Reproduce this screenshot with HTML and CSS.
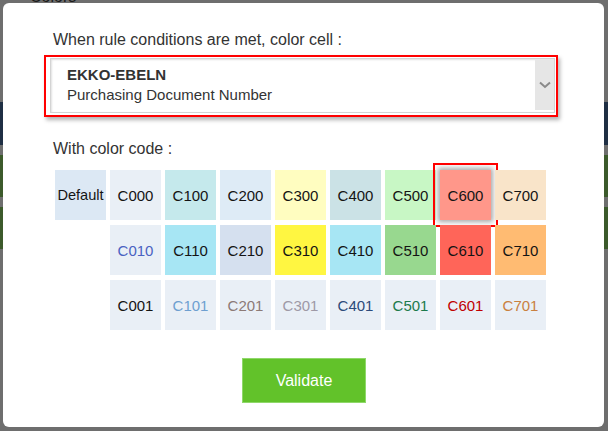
FILE: index.html
```html
<!DOCTYPE html>
<html>
<head>
<meta charset="utf-8">
<link rel="stylesheet" href="styles.css">
</head>
<body>
<div class="page">
  <div class="page-top"><span class="page-title">Colors</span></div>
  <div class="page-row navy"></div>
  <div class="page-row green"></div>
  <div class="page-row green"></div>
</div>
<div class="overlay"></div>
<div class="modal">
  <div class="label">When rule conditions are met, color cell :</div>
  <div class="select-wrap">
    <div class="select">
      <div class="select-text">
        <div class="sel-code">EKKO-EBELN</div>
        <div class="sel-desc">Purchasing Document Number</div>
      </div>
      <div class="select-arrow">
        <svg width="12" height="8" viewBox="0 0 12 8"><path d="M1 1.5 L6 6 L11 1.5" fill="none" stroke="#8a8a8a" stroke-width="2"/></svg>
      </div>
    </div>
  </div>
  <div class="label label-2">With color code :</div>
  <div class="grid">
    <div class="cell c-default">Default</div>
    <div class="cell c000">C000</div>
    <div class="cell c100">C100</div>
    <div class="cell c200">C200</div>
    <div class="cell c300">C300</div>
    <div class="cell c400">C400</div>
    <div class="cell c500">C500</div>
    <div class="cell c600 selected">C600</div>
    <div class="cell c700">C700</div>

    <div class="cell empty"></div>
    <div class="cell c010">C010</div>
    <div class="cell c110">C110</div>
    <div class="cell c210">C210</div>
    <div class="cell c310">C310</div>
    <div class="cell c410">C410</div>
    <div class="cell c510">C510</div>
    <div class="cell c610">C610</div>
    <div class="cell c710">C710</div>

    <div class="cell empty"></div>
    <div class="cell pale t001">C001</div>
    <div class="cell pale t101">C101</div>
    <div class="cell pale t201">C201</div>
    <div class="cell pale t301">C301</div>
    <div class="cell pale t401">C401</div>
    <div class="cell pale t501">C501</div>
    <div class="cell pale t601">C601</div>
    <div class="cell pale t701">C701</div>
  </div>
  <div class="actions">
    <button class="validate">Validate</button>
  </div>
</div>
</body>
</html>
```
FILE: styles.css
```css
html, body {
  margin: 0;
  padding: 0;
}
body {
  width: 608px;
  height: 431px;
  overflow: hidden;
  background: #6e6e6e;
  font-family: "Liberation Sans", Arial, sans-serif;
  position: relative;
}
.page {
  display: flex;
  flex-direction: column;
}
.page-top {
  height: 102px;
  position: relative;
}
.page-title {
  position: absolute;
  left: 30px;
  top: -12px;
  font-size: 16px;
  color: #1a1a1a;
}
.page-row {
  height: 43px;
  margin-bottom: 10px;
}
.page-row.navy { background: #1f2f44; }
.page-row.green { background: #3c5a2b; height: 42px; }

.overlay {
  position: absolute;
  inset: 0;
  background: rgba(110,110,110,0.0);
}

.modal {
  position: absolute;
  left: 3px;
  top: 3px;
  width: 601px;
  height: 424px;
  box-sizing: border-box;
  background: #fff;
  border-radius: 6px;
  padding: 28px 0 0 50px;
  color: #333;
}
.label {
  font-size: 16px;
  line-height: 18px;
  color: #333;
  margin-bottom: 6px;
}
.label-2 {
  margin-top: 23px;
  margin-bottom: 12px;
}
.select-wrap {
  width: 514px;
  height: 62px;
  margin-left: -9px;
  box-sizing: border-box;
  border: 2px solid #f00;
  padding: 1px 1px 2px 4px;
  box-shadow: 2px 3px 4px rgba(0,0,0,0.3);
}
.select {
  box-sizing: border-box;
  height: 55px;
  border: 1px solid #d4d4d4;
  box-shadow: inset 1px 1px 2px rgba(0,0,0,0.12);
  display: flex;
  background: #fff;
}
.select-text {
  flex: 1;
  padding: 6px 0 0 16px;
  font-size: 15px;
  line-height: 19.5px;
  color: #333;
}
.sel-code {
  font-weight: bold;
}
.select-arrow {
  width: 19px;
  margin: 1px 0 2px 0;
  background: #e6e6e6;
  display: flex;
  align-items: center;
  justify-content: center;
}

.grid {
  display: grid;
  grid-template-columns: repeat(9, 51px);
  grid-auto-rows: 50px;
  column-gap: 4px;
  row-gap: 5px;
  margin-left: 2px;
}
.cell {
  display: flex;
  align-items: center;
  justify-content: center;
  font-size: 15px;
  color: #141414;
  background: #e9eff6;
}
.cell.empty { background: transparent; }
.c-default { background: #dce8f4; font-size: 14.6px; }
.c000 { background: #e9eff6; }
.c100 { background: #c5e9ec; }
.c200 { background: #deebf6; }
.c300 { background: #fffdc0; }
.c400 { background: #cbe2e6; }
.c500 { background: #c8f7c5; }
.c600 { background: #ff978a; }
.c700 { background: #f9e4c9; }
.c010 { background: #e9eff6; color: #4a62c2; }
.c110 { background: #a7e6f4; }
.c210 { background: #d5e0ef; }
.c310 { background: #fff641; }
.c410 { background: #a7e6f4; }
.c510 { background: #98d88f; }
.c610 { background: #ff6559; }
.c710 { background: #ffbb72; }
.t001 { color: #141414; }
.t101 { color: #6e9fd0; }
.t201 { color: #8c7a76; }
.t301 { color: #9e99a6; }
.t401 { color: #2c4a7a; }
.t501 { color: #1c7a4c; }
.t601 { color: #c00000; }
.t701 { color: #c98040; }
.selected {
  outline: 2px solid #f00;
  outline-offset: 5px;
  box-shadow: 0 0 5px 2px rgba(0,0,0,0.35);
}

.actions {
  display: flex;
  justify-content: center;
  margin-left: -50px;
  margin-top: 28px;
}
.validate {
  width: 124px;
  height: 45px;
  background: #62c22a;
  border: 1px solid #8fd86a;
  color: #fff;
  font-family: "Liberation Sans", Arial, sans-serif;
  font-size: 16px;
  padding: 0;
  margin-left: 1px;
}
```
